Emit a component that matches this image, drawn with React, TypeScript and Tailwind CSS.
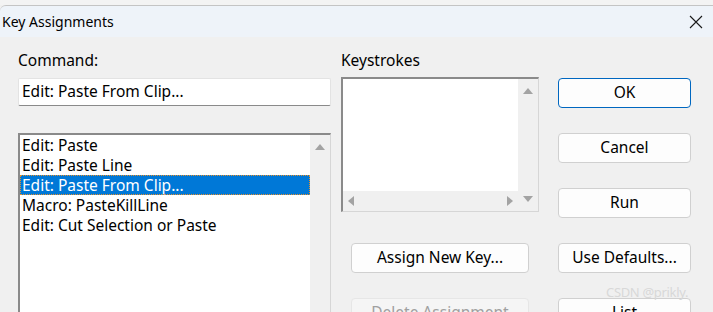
import React from "react";

const font = { fontFamily: '"Noto Sans", "Segoe UI", Arial, sans-serif' };

function Btn({ label, primary, disabled }: { label: string; primary?: boolean; disabled?: boolean }) {
  return (
    <div
      className={
        "h-[30px] w-full rounded-[4px] flex items-center justify-center text-[15.5px] " +
        (primary
          ? "border border-[#0067c0] bg-[#fdfdfd] text-black"
          : disabled
          ? "border border-[#e6e6e6] bg-[#f5f5f5] text-[#a0a0a0]"
          : "border border-[#d0d0d0] bg-[#fdfdfd] text-black")
      }
    >
      {label}
    </div>
  );
}

function Tri({ dir }: { dir: "up" | "down" | "left" | "right" }) {
  const pts =
    dir === "up"
      ? "0,7 5,1 10,7"
      : dir === "down"
      ? "0,1 10,1 5,7"
      : dir === "left"
      ? "7,0 7,10 1,5"
      : "1,0 1,10 7,5";
  const w = dir === "up" || dir === "down" ? 10 : 8;
  const h = dir === "up" || dir === "down" ? 8 : 10;
  return (
    <svg width={w} height={h} viewBox={`0 0 ${w} ${h}`}>
      <polygon points={pts} fill="#a3a3a3" />
    </svg>
  );
}

export default function App() {
  const items = [
    "Edit: Paste",
    "Edit: Paste Line",
    "Edit: Paste From Clip...",
    "Macro: PasteKillLine",
    "Edit: Cut Selection or Paste",
  ];
  return (
    <div className="w-[713px] h-[312px] overflow-hidden bg-[#f0f0f0] relative" style={font}>
      {/* title bar */}
      <div className="h-[5px] bg-[#f3f3f3]" />
      <div className="h-[32px] bg-[#eef3f9] border-t border-[#c4c4c4] rounded-tl-[6px] flex items-center justify-between">
        <span className="pl-[2px] text-[14px] text-black leading-none">Key Assignments</span>
        <svg width="14" height="14" viewBox="0 0 14 14" className="mr-[10px]">
          <path d="M1 1 L13 13 M13 1 L1 13" stroke="#1a1a1a" strokeWidth="1.1" />
        </svg>
      </div>
      {/* body */}
      <div className="flex pt-[13px]">
        {/* left column */}
        <div className="ml-[18px] w-[313px] flex flex-col">
          <div className="h-[20px] leading-[20px] text-[15.5px] text-black">Command:</div>
          <div className="mt-[8px] h-[28px] bg-white border border-[#e3e3e3] border-b-[#8a8a8a] rounded-[2px] flex items-center pl-[3px] text-[15.5px] text-black">
            Edit: Paste From Clip...
          </div>
          <div className="mt-[27px] h-[200px] bg-white border-t-2 border-l-2 border-t-[#8a8a8a] border-l-[#8a8a8a] border-r border-r-[#d6d6d6] flex">
            <div className="flex-1">
              {items.map((t, i) => (
                <div
                  key={t}
                  className={
                    "h-[20px] leading-[20px] text-[15.5px] pl-[2px] whitespace-nowrap " +
                    (i === 2
                      ? "bg-[#0078d7] text-white outline-1 outline-dotted outline-[#e8902a] -outline-offset-1"
                      : "text-black")
                  }
                >
                  {t}
                </div>
              ))}
            </div>
            <div className="w-[20px] bg-[#f0f0f0] flex flex-col items-center pt-[8px]">
              <Tri dir="up" />
            </div>
          </div>
        </div>
        {/* middle column */}
        <div className="ml-[10px] w-[198px] flex flex-col">
          <div className="h-[20px] leading-[20px] text-[15.5px] text-black">Keystrokes</div>
          <div className="mt-[7px] h-[135px] bg-white border-t-2 border-l-2 border-t-[#8a8a8a] border-l-[#8a8a8a] border-r border-b border-r-[#d6d6d6] border-b-[#d6d6d6] flex">
            <div className="flex-1 flex flex-col">
              <div className="flex-1" />
              <div className="h-[20px] bg-[#f0f0f0] flex items-center justify-between px-[4px]">
                <Tri dir="left" />
                <Tri dir="right" />
              </div>
            </div>
            <div className="w-[20px] bg-[#f0f0f0] flex flex-col items-center justify-between pt-[8px] pb-[8px]">
              <Tri dir="up" />
              <Tri dir="down" />
            </div>
          </div>
          <div className="mt-[31px] mx-[10px]">
            <Btn label="Assign New Key..." />
          </div>
          <div className="mt-[25px] mx-[10px]">
            <Btn label="Delete Assignment" disabled />
          </div>
        </div>
        {/* right column */}
        <div className="ml-[19px] w-[133px] flex flex-col pt-[28px] gap-[25px]">
          <Btn label="OK" primary />
          <Btn label="Cancel" />
          <Btn label="Run" />
          <Btn label="Use Defaults..." />
          <Btn label="List" />
        </div>
      </div>
      <div className="absolute left-[606px] top-[286px] text-[13px] leading-none text-[#d8d8d8] tracking-tight whitespace-nowrap">
        CSDN @prikly.
      </div>
    </div>
  );
}
